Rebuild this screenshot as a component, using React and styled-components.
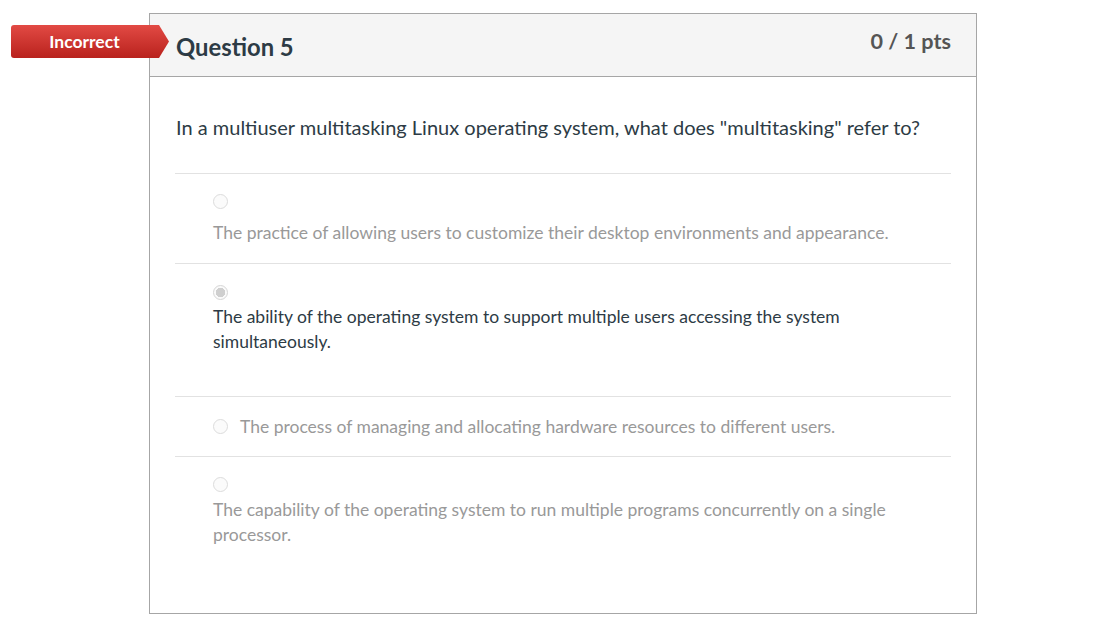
import React from 'react'
import styled, { createGlobalStyle } from 'styled-components'

const GlobalStyle = createGlobalStyle`
    body {
        margin: 0;
        background: #fff;
        font-family: Lato, "Open Sans", sans-serif;
    }
`

const Page = styled.div`
    padding: 13px 0 0 149px;
`

const Card = styled.div`
    position: relative;
    width: 826px;
    height: 599px;
    border: 1px solid #a6a6a6;
    box-sizing: content-box;
`

const Badge = styled.div`
    position: absolute;
    left: -139px;
    top: 11px;
    width: 158px;
    height: 33px;
    padding-right: 11px;
    box-sizing: border-box;
    display: flex;
    align-items: center;
    justify-content: center;
    color: #fff;
    font-weight: 700;
    font-size: 17.5px;
    background: linear-gradient(#e24a44, #b9221d);
    border-radius: 3px 0 0 3px;
    clip-path: polygon(0 0, calc(100% - 10px) 0, 100% 50%, calc(100% - 10px) 100%, 0 100%);
`

const Header = styled.div`
    height: 62px;
    background: #f5f5f5;
    border-bottom: 1px solid #a6a6a6;
    display: flex;
    justify-content: space-between;
    align-items: flex-start;
    padding: 0 25px 0 26px;
`

const Title = styled.h2`
    margin: 17px 0 0;
    font-size: 23.8px;
    line-height: 32px;
    font-weight: 700;
    color: #2d3b45;
`

const Points = styled.div`
    margin-top: 12px;
    font-size: 21.6px;
    line-height: 30px;
    font-weight: 700;
    color: #555;
`

const Body = styled.div`
    padding: 36px 25px 0 26px;
`

const QuestionText = styled.p`
    margin: 0 0 31px;
    font-size: 20px;
    line-height: 29px;
    color: #2d3b45;
`

const Answers = styled.div`
    margin-left: -1px;
`

const Answer = styled.div`
    border-top: 1px solid #e2e2e2;
    padding: ${p => p.$pad};
    display: flex;
    flex-direction: ${p => (p.$inline ? 'row' : 'column')};
    align-items: ${p => (p.$inline ? 'center' : 'flex-start')};
    gap: ${p => p.$gap}px;
`

const Radio = styled.span`
    width: 15px;
    height: 15px;
    flex: none;
    border-radius: 50%;
    box-sizing: border-box;
    border: 1px solid #dcdcdc;
    background: #fbfbfb;
    ${p => p.$checked && `
        border: 1px solid #d6d6d6;
        background: radial-gradient(circle, #cfcfcf 0 4.5px, #fafafa 5px);
    `}
`

const AnswerText = styled.div`
    font-size: 17.5px;
    line-height: 25px;
    color: ${p => (p.$selected ? '#2d3b45' : '#999')};
`

const answers = [
    { text: 'The practice of allowing users to customize their desktop environments and appearance.', pad: '20px 20px 18px 38px', gap: 11 },
    { text: 'The ability of the operating system to support multiple users accessing the system simultaneously.', pad: '21px 20px 42px 38px', gap: 4, selected: true },
    { text: 'The process of managing and allocating hardware resources to different users.', pad: '17px 20px 17px 38px', gap: 12, inline: true },
    { text: 'The capability of the operating system to run multiple programs concurrently on a single processor.', pad: '20px 20px 17px 38px', gap: 5 },
]

const App = () => {
    return (
        <>
            <GlobalStyle />
            <Page>
                <Card>
                    <Badge>Incorrect</Badge>
                    <Header>
                        <Title>Question 5</Title>
                        <Points>0 / 1 pts</Points>
                    </Header>
                    <Body>
                        <QuestionText>
                            In a multiuser multitasking Linux operating system, what does "multitasking" refer to?
                        </QuestionText>
                        <Answers>
                            {answers.map((a, i) => (
                                <Answer key={i} $pad={a.pad} $gap={a.gap} $inline={a.inline}>
                                    <Radio $checked={a.selected} />
                                    <AnswerText $selected={a.selected}>{a.text}</AnswerText>
                                </Answer>
                            ))}
                        </Answers>
                    </Body>
                </Card>
            </Page>
        </>
    )
}

export default App
